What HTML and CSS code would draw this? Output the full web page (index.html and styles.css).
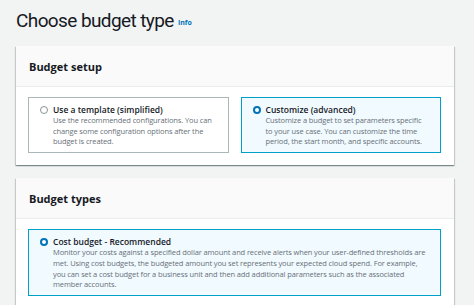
FILE: index.html
```html
<!DOCTYPE html>
<html lang="en">
<head>
    <meta charset="UTF-8">
    <meta name="viewport" content="width=device-width, initial-scale=1.0">
    <title>Choose budget type</title>
    <link rel="stylesheet" href="styles.css">
</head>
<body>
    <h1 class="page-title">Choose budget type <a class="info-link" href="#">Info</a></h1>

    <!-- Budget setup -->
    <section class="panel">
        <div class="panel-header">
            <h2>Budget setup</h2>
        </div>
        <div class="panel-body tiles">
            <label class="tile">
                <span class="radio"></span>
                <span class="tile-text">
                    <span class="tile-title">Use a template (simplified)</span>
                    <span class="tile-desc">Use the recommended configurations. You can change some configuration options after the budget is created.</span>
                </span>
            </label>
            <label class="tile selected">
                <span class="radio"></span>
                <span class="tile-text">
                    <span class="tile-title">Customize (advanced)</span>
                    <span class="tile-desc">Customize a budget to set parameters specific to your use case. You can customize the time period, the start month, and specific accounts.</span>
                </span>
            </label>
        </div>
    </section>

    <!-- Budget types -->
    <section class="panel">
        <div class="panel-header">
            <h2>Budget types</h2>
        </div>
        <div class="panel-body">
            <label class="tile selected">
                <span class="radio"></span>
                <span class="tile-text">
                    <span class="tile-title">Cost budget - Recommended</span>
                    <span class="tile-desc">Monitor your costs against a specified dollar amount and receive alerts when your user-defined thresholds are met. Using cost budgets, the budgeted amount you set represents your expected cloud spend. For example, you can set a cost budget for a business unit and then add additional parameters such as the associated member accounts.</span>
                </span>
            </label>
        </div>
    </section>
</body>
</html>
```

FILE: styles.css
```css
/* base */
body {
    margin: 0;
    padding: 0 20px 0 16px;
    background-color: #f2f3f3;
    font-family: "Open Sans", sans-serif;
    color: #16191f;
}

.page-title {
    margin: 0;
    padding: 7px 0 10px;
    font-family: Roboto, "Open Sans", sans-serif;
    font-size: 19px;
    line-height: 27px;
    font-weight: 400;
    letter-spacing: -0.6px;
}

.info-link {
    font-family: "Open Sans", sans-serif;
    font-size: 7px;
    font-weight: 700;
    letter-spacing: 0;
    color: #0073bb;
    text-decoration: none;
    vertical-align: 2px;
}

/* panels */
.panel {
    background-color: #fff;
    margin-bottom: 13px;
    box-shadow: 0 1px 1px 0 rgba(0, 28, 36, 0.3), 1px 1px 1px 0 rgba(0, 28, 36, 0.15), -1px 1px 1px 0 rgba(0, 28, 36, 0.15);
}

.panel-header {
    background-color: #fafafa;
    border-bottom: 1px solid #eaeded;
    height: 40px;
    display: flex;
    align-items: center;
    padding: 0 13px;
}

.panel-header h2 {
    margin: 0;
    font-size: 11px;
    font-weight: 700;
}

.panel-body {
    padding: 10px 13px 12px 12px;
}

.tiles {
    display: grid;
    grid-template-columns: 1fr 1fr;
    gap: 12px;
}

/* radio tiles */
.tile {
    display: flex;
    gap: 5px;
    padding: 6px 11px 5px;
    border: 1px solid #aab7b8;
    cursor: pointer;
}

.tile.selected {
    border-color: #00a1c9;
    background-color: #f1faff;
}

.radio {
    flex: none;
    box-sizing: border-box;
    width: 8px;
    height: 8px;
    margin-top: 1.5px;
    border: 1px solid #879596;
    border-radius: 50%;
    background-color: #fff;
}

.selected .radio {
    border: 2.5px solid #0073bb;
}

.tile-text {
    display: flex;
    flex-direction: column;
}

.tile-title {
    font-size: 8.5px;
    line-height: 11px;
    font-weight: 600;
}

.tile-desc {
    font-size: 7.5px;
    line-height: 10.7px;
    letter-spacing: -0.12px;
    color: #687078;
}
```
